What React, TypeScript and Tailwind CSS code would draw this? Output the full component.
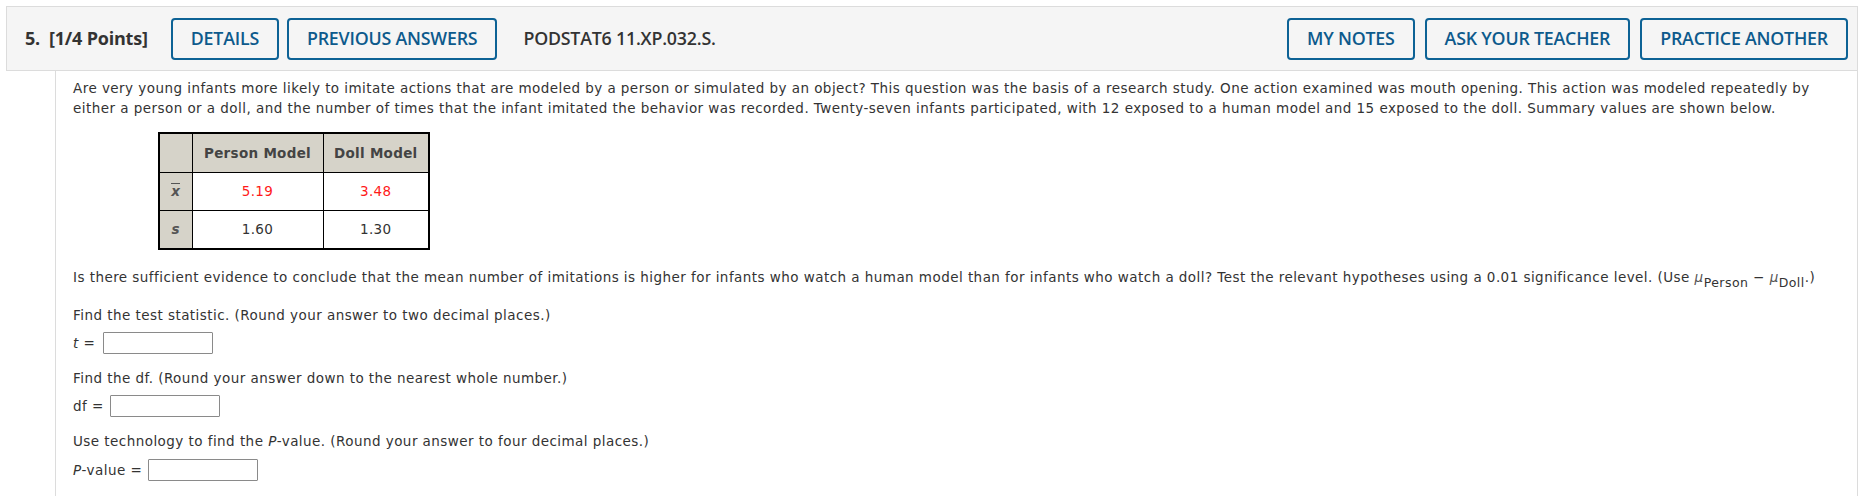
const leftButtons = ["DETAILS", "PREVIOUS ANSWERS"];
const rightButtons = ["MY NOTES", "ASK YOUR TEACHER", "PRACTICE ANOTHER"];

const HeadButton = ({ label }: { label: string }) => (
  <button className="h-[42px] px-[18px] border-2 border-[#0d6295] rounded-[4px] text-[#0d5a8c] text-[17.8px] font-semibold tracking-[-0.2px]">
    {label}
  </button>
);

const AnswerRow = ({ label, gap }: { label: React.ReactNode; gap: string }) => (
  <div className="flex items-center h-[22px]">
    <span className={gap}>{label}</span>
    <input
      type="text"
      className="w-[110px] h-[22px] border border-[#8a8a8a] rounded-[1px] bg-white"
    />
  </div>
);

export default function App() {
  return (
    <div className="w-[1868px] h-[496px] bg-white overflow-hidden pt-[6px] pl-[6px]">
      <div
        className="w-[1852px] h-[65px] bg-[#f5f5f5] border border-[#dcdcdc] flex items-center pl-[18px] pr-[9px]"
        style={{ fontFamily: "'Open Sans', sans-serif" }}
      >
        <span className="text-[18px] font-bold text-[#333] mr-[23px] tracking-[-0.2px]">
          5.&nbsp;&nbsp;[1/4 Points]
        </span>
        <div className="flex gap-[8px]">
          {leftButtons.map((b) => (
            <HeadButton key={b} label={b} />
          ))}
        </div>
        <span className="ml-[26px] text-[17.8px] font-semibold text-[#333] tracking-[-0.2px]">
          PODSTAT6 11.XP.032.S.
        </span>
        <div className="ml-auto flex gap-[10px]">
          {rightButtons.map((b) => (
            <HeadButton key={b} label={b} />
          ))}
        </div>
      </div>

      <div
        className="ml-[49px] w-[1803px] h-[430px] border-l border-r border-[#dcdcdc] pl-[17px] pr-[30px] pt-[7px] text-[13.5px] tracking-[0.45px] leading-[20px] text-[#333]"
        style={{ fontFamily: "'DejaVu Sans', Verdana, sans-serif" }}
      >
        <p>
          Are very young infants more likely to imitate actions that are modeled by a person or
          simulated by an object? This question was the basis of a research study. One action
          examined was mouth opening. This action was modeled repeatedly by either a person or a
          doll, and the number of times that the infant imitated the behavior was recorded.
          Twenty-seven infants participated, with 12 exposed to a human model and 15 exposed to
          the doll. Summary values are shown below.
        </p>

        <table className="ml-[85px] mt-[14px] border-collapse border-2 border-black text-center tracking-[0.3px]">
          <tbody>
            <tr className="h-[39px] bg-[#d6d3c9]">
              <td className="w-[33px] border border-black"></td>
              <td className="w-[131px] border border-black font-bold text-[#444]">Person Model</td>
              <td className="w-[106px] border border-black font-bold text-[#444]">Doll Model</td>
            </tr>
            <tr className="h-[38px]">
              <td className="border border-black bg-[#d6d3c9] font-bold italic text-[#555]">
                <span className="border-t border-[#555] leading-[14px] inline-block">x</span>
              </td>
              <td className="border border-black text-[#ff1a1a]">5.19</td>
              <td className="border border-black text-[#ff1a1a]">3.48</td>
            </tr>
            <tr className="h-[39px]">
              <td className="border border-black bg-[#d6d3c9] font-bold italic text-[#555]">s</td>
              <td className="border border-black">1.60</td>
              <td className="border border-black">1.30</td>
            </tr>
          </tbody>
        </table>

        <p className="mt-[17px]">
          Is there sufficient evidence to conclude that the mean number of imitations is higher
          for infants who watch a human model than for infants who watch a doll? Test the relevant
          hypotheses using a 0.01 significance level. (Use{" "}
          <i className="text-[#555]">μ</i>
          <span className="text-[12.5px] relative top-[5px]">Person</span> −{" "}
          <i className="text-[#555]">μ</i>
          <span className="text-[12.5px] relative top-[5px]">Doll</span>.)
        </p>

        <p className="mt-[17px]">Find the test statistic. (Round your answer to two decimal places.)</p>
        <div className="mt-[7px]">
          <AnswerRow label={<><i>t</i> =</>} gap="mr-[8px]" />
        </div>

        <p className="mt-[14px]">Find the df. (Round your answer down to the nearest whole number.)</p>
        <div className="mt-[7px]">
          <AnswerRow label="df =" gap="mr-[6px]" />
        </div>

        <p className="mt-[14px]">
          Use technology to find the <i>P</i>-value. (Round your answer to four decimal places.)
        </p>
        <div className="mt-[8px]">
          <AnswerRow label={<><i>P</i>-value =</>} gap="mr-[6px]" />
        </div>
      </div>
    </div>
  );
}
